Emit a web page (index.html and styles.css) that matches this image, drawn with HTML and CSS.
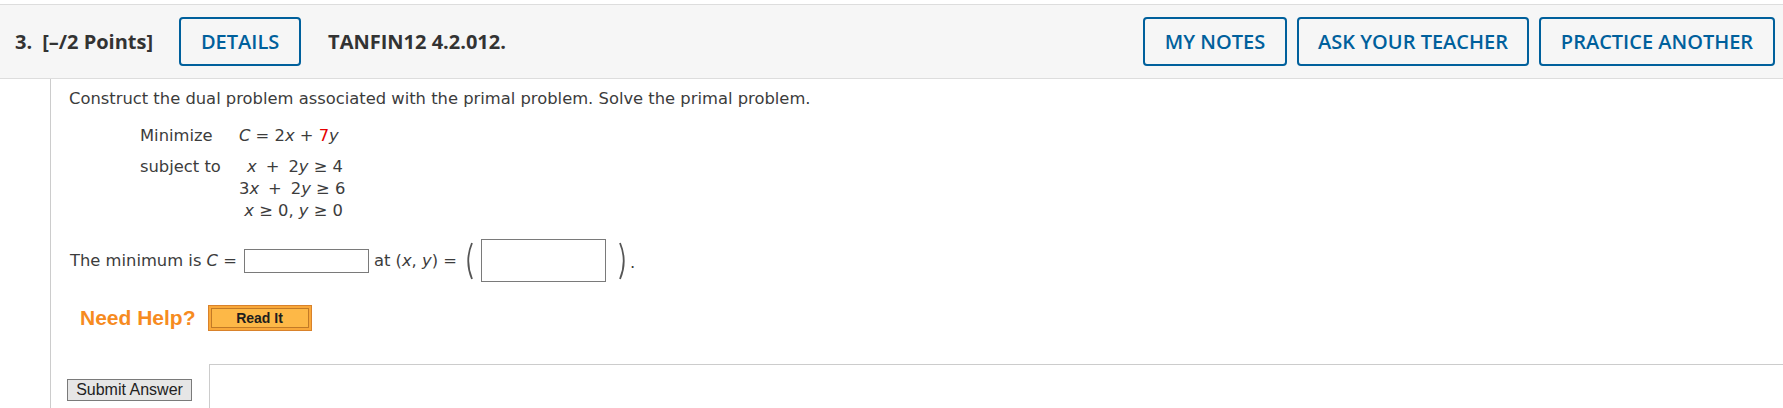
FILE: index.html
```html
<!DOCTYPE html>
<html lang="en">
<head>
<meta charset="utf-8">
<title>Question 3</title>
<link rel="stylesheet" href="styles.css">
</head>
<body>
<div class="page">
  <header class="qhead">
    <div class="qlabel"><span class="qnum">3.</span><span class="qpts">[–/2 Points]</span></div>
    <button class="hbtn details">DETAILS</button>
    <div class="qcode">TANFIN12 4.2.012.</div>
    <div class="hright">
      <button class="hbtn">MY NOTES</button>
      <button class="hbtn">ASK YOUR TEACHER</button>
      <button class="hbtn">PRACTICE ANOTHER</button>
    </div>
  </header>
  <div class="qbody">
    <div class="gutter"></div>
    <div class="content">
      <p class="prompt">Construct the dual problem associated with the primal problem. Solve the primal problem.</p>
      <div class="lp">
        <div class="lp-label lp-min">Minimize</div>
        <div class="lp-expr lp-min"><i>C</i> = 2<i>x</i> + <span class="red">7</span><i>y</i></div>
        <div class="lp-label lp-sub">subject to</div>
        <div class="lp-cons">
          <div><i>x</i><span class="op">+</span>2<i>y</i> ≥ 4</div>
          <div>3<i>x</i><span class="op">+</span>2<i>y</i> ≥ 6</div>
          <div><i>x</i> ≥ 0, <i>y</i> ≥ 0</div>
        </div>
      </div>
      <div class="answer">
        <span class="atext">The minimum is <i>C</i> =</span>
        <span class="abox small"></span>
        <span class="atext">at (<i>x</i>, <i>y</i>) =</span>
        <svg class="paren" width="10" height="38" viewBox="0 0 10 38"><path d="M8 1 Q0.5 19 8 37" fill="none" stroke="#555" stroke-width="1.8"/></svg>
        <span class="abox big"></span>
        <svg class="paren" width="10" height="38" viewBox="0 0 10 38"><path d="M2 1 Q9.5 19 2 37" fill="none" stroke="#555" stroke-width="1.8"/></svg>
        <span class="atext dot">.</span>
      </div>
      <div class="help">
        <span class="needhelp">Need Help?</span>
        <button class="readit"><span>Read It</span></button>
      </div>
      <div class="submitrow">
        <button class="submit">Submit Answer</button>
        <div class="panel"></div>
      </div>
    </div>
  </div>
</div>
</body>
</html>
```

FILE: styles.css
```css
html, body {
  margin: 0;
  padding: 0;
  background: #fff;
  overflow: hidden;
}

.page {
  padding-top: 4px;
  width: 1783px;
  height: 404px;
  display: flex;
  flex-direction: column;
}

.qhead {
  display: flex;
  align-items: center;
  height: 73px;
  background: #f6f6f6;
  border-top: 1px solid #dddddd;
  border-bottom: 1px solid #dddddd;
  padding: 0 8px 0 15px;
  font-family: "Open Sans", "Noto Sans", sans-serif;
  color: #333;
}

.qlabel {
  font-weight: 700;
  font-size: 20px;
  display: flex;
}

.qnum {
  margin-right: 10px;
}

.hbtn {
  font-family: "Open Sans", "Noto Sans", sans-serif;
  font-weight: 600;
  font-size: 20px;
  color: #00609c;
  background: #f6f6f6;
  border: 2px solid #00609c;
  border-radius: 4px;
  height: 49px;
  padding: 0;
  margin: 0;
  cursor: pointer;
}

.details {
  margin-left: 26px;
  width: 122px;
}

.qcode {
  margin-left: 27px;
  font-weight: 700;
  font-size: 20px;
}

.hright {
  margin-left: auto;
  display: flex;
  gap: 10px;
}

.hright .hbtn:nth-child(1) { width: 144px; }
.hright .hbtn:nth-child(2) { width: 232px; }
.hright .hbtn:nth-child(3) { width: 236px; }

.qbody {
  flex: 1;
  display: flex;
}

.gutter {
  width: 50px;
  border-right: 1px solid #cccccc;
  flex: none;
}

.content {
  flex: 1;
  padding: 9px 0 0 18px;
  font-family: "DejaVu Sans", Verdana, sans-serif;
  font-size: 16.35px;
  line-height: 22px;
  color: #3c3c3c;
  display: flex;
  flex-direction: column;
}

.prompt {
  margin: 0;
}

i {
  font-style: oblique;
}

.red {
  color: #e60000;
}

.op {
  margin: 0 9px 0 9px;
}

.lp {
  display: grid;
  grid-template-columns: 99px auto;
  justify-content: start;
  margin: 15px 0 0 71px;
}

.lp-label, .lp-expr {
  white-space: nowrap;
}

.lp-min {
  margin-bottom: 9px;
}

.lp-cons {
  text-align: right;
  width: 104px;
  white-space: nowrap;
}

.answer {
  display: flex;
  align-items: center;
  height: 43px;
  margin: 17px 0 0 1px;
  white-space: nowrap;
}

.abox {
  display: inline-block;
  border: 1px solid #7a7a7a;
  background: #fff;
  box-sizing: border-box;
  width: 125px;
}

.abox.small {
  height: 24px;
  margin: 0 5px 0 7px;
}

.abox.big {
  height: 43px;
  margin: 0 12px 0 7px;
}

.paren {
  margin-left: 7px;
  display: block;
}

.abox.big + .paren {
  margin-left: 0;
}

.dot {
  margin-left: 2px;
  align-self: flex-end;
  margin-bottom: 8px;
}

.help {
  display: flex;
  align-items: center;
  margin: 23px 0 0 11px;
}

.needhelp {
  font-family: "Liberation Sans", Arial, sans-serif;
  font-weight: 700;
  font-size: 21px;
  color: #f68b1f;
  margin-right: 12px;
}

.readit {
  width: 104px;
  height: 26px;
  padding: 2px;
  margin: 0;
  border: 1px solid #d9822b;
  background: #f9a83a;
  display: flex;
  cursor: pointer;
}

.readit span {
  flex: 1;
  display: flex;
  align-items: center;
  justify-content: center;
  border: 1px solid #c27a26;
  background: #fdb847;
  font-family: "Liberation Sans", Arial, sans-serif;
  font-weight: 700;
  font-size: 14px;
  color: #1e1e1e;
}

.submitrow {
  display: flex;
  align-items: flex-start;
  margin-top: 33px;
  flex: 1;
}

.submit {
  margin: 15px 0 0 -2px;
  width: 125px;
  height: 22px;
  padding: 0;
  font-family: "Liberation Sans", Arial, sans-serif;
  font-size: 16px;
  color: #222;
  background: #e6e6e6;
  border: 1px solid #7a7a7a;
  cursor: pointer;
}

.panel {
  margin-left: 17px;
  flex: 1;
  align-self: stretch;
  border: 1px solid #cccccc;
  border-bottom: none;
  border-right: none;
}
```
